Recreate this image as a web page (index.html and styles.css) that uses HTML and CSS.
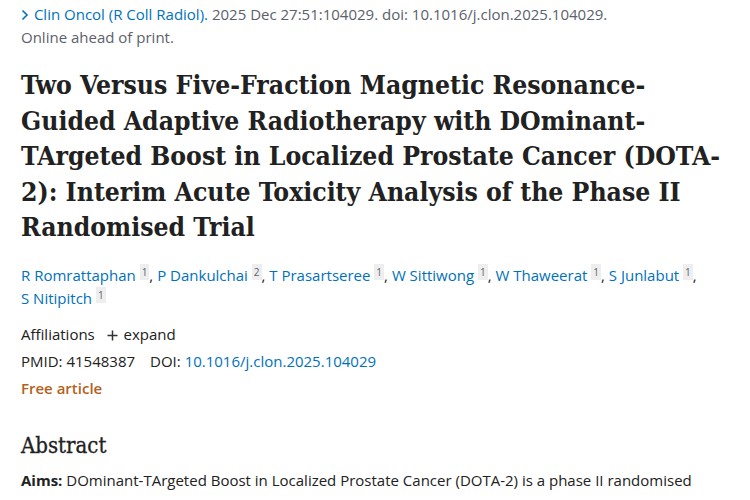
FILE: index.html
```html
<!DOCTYPE html>
<html>
<head>
<meta charset="utf-8">
<link rel="stylesheet" href="styles.css">
</head>
<body>
<main class="article">
  <div class="cit">
    <div class="cit-line"><a class="journal" href="#"><svg class="chev" width="8" height="12" viewBox="0 0 8 12"><path d="M1.5 1.5 L6 6 L1.5 10.5" fill="none" stroke="#0071bc" stroke-width="1.6"/></svg> Clin Oncol (R Coll Radiol).</a> <span class="cit-rest">2025 Dec 27:51:104029. doi: 10.1016/j.clon.2025.104029.</span></div>
    <div class="cit-line">Online ahead of print.</div>
  </div>
  <h1 class="title">Two Versus Five-Fraction Magnetic Resonance-Guided Adaptive Radiotherapy with DOminant-TArgeted Boost in Localized Prostate Cancer (DOTA-2): Interim Acute Toxicity Analysis of the Phase II Randomised Trial</h1>
  <div class="authors">
    <span class="author"><a href="#">R Romrattaphan</a> <sup class="aff">1</sup>,</span>
    <span class="author"><a href="#">P Dankulchai</a> <sup class="aff">2</sup>,</span>
    <span class="author"><a href="#">T Prasartseree</a> <sup class="aff">1</sup>,</span>
    <span class="author"><a href="#">W Sittiwong</a> <sup class="aff">1</sup>,</span>
    <span class="author"><a href="#">W Thaweerat</a> <sup class="aff">1</sup>,</span>
    <span class="author"><a href="#">S Junlabut</a> <sup class="aff">1</sup>,</span>
    <span class="author"><a href="#">S Nitipitch</a> <sup class="aff">1</sup></span>
  </div>
  <div class="meta">
    <div class="row">Affiliations <span class="expand"><svg class="plus" width="11" height="11" viewBox="0 0 11 11"><path d="M5.5 0.5 V10.5 M0.5 5.5 H10.5" stroke="#333" stroke-width="1.5"/></svg> expand</span></div>
    <div class="row">PMID: 41548387<span class="gap"></span>DOI: <a href="#">10.1016/j.clon.2025.104029</a></div>
    <div class="row free">Free article</div>
  </div>
  <h2 class="abs-h">Abstract</h2>
  <p class="abs"><b>Aims:</b> DOminant-TArgeted Boost in Localized Prostate Cancer (DOTA-2) is a phase II randomised</p>
</main>
</body>
</html>
```
FILE: styles.css
```css
html, body { margin: 0; padding: 0; background: #fff; }
body {
  font-family: "Open Sans", "Noto Sans", sans-serif;
  font-size: 15px;
  color: #212121;
}
a { color: #0071bc; text-decoration: none; }
.article { padding: 3px 22px 0 21px; }
.cit-line { line-height: 23px; }
.cit { color: #5b616b; }
.chev { margin-right: 1px; vertical-align: -1px; }
.title {
  font-family: "DejaVu Serif", serif;
  font-stretch: condensed;
  font-weight: bold;
  font-size: 26.3px;
  line-height: 35.5px;
  margin: 18px 0 0 0;
  color: #212121;
}
.authors { margin-top: 19px; line-height: 23px; }
.author { white-space: nowrap; }
.aff {
  font-size: 10px;
  background: #eeeeee;
  color: #5b616b;
  padding: 1px 2px;
  vertical-align: 5px;
  line-height: 1;
}
.meta { margin-top: 11px; }
.row { line-height: 27px; }
.expand { margin-left: 8px; }
.plus { vertical-align: -1px; margin-right: 2px; }
.gap { display: inline-block; width: 15px; }
.free { color: #b5611a; font-weight: 600; }
.abs-h {
  font-family: "DejaVu Serif", serif;
  font-stretch: condensed;
  font-weight: normal;
  font-size: 22px;
  margin: 30px 0 0 0;
  line-height: 28px;
  -webkit-text-stroke: 0.3px #212121;
}
.abs { margin: 9px 0 0; line-height: 23px; }
```
